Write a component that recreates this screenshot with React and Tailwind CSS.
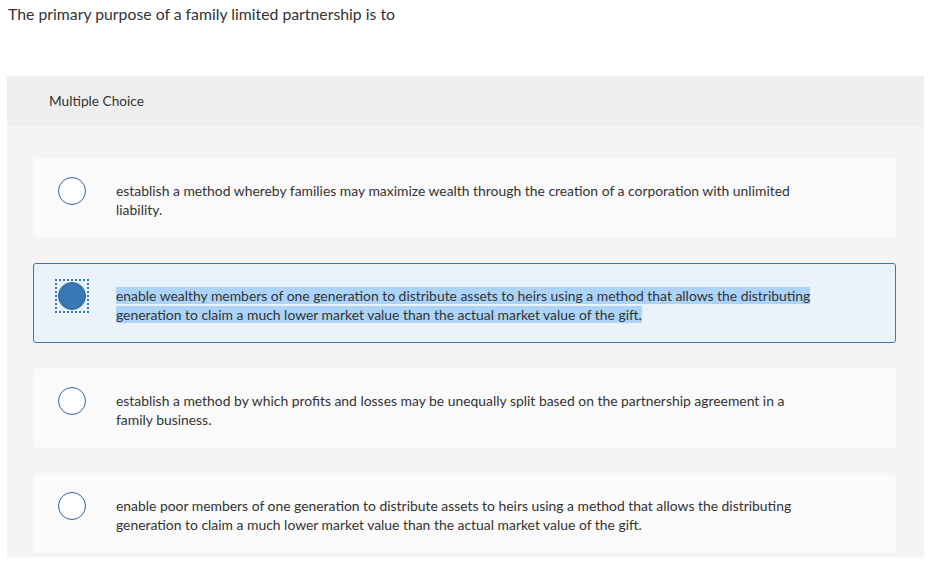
import React from "react";

const options = [
  {
    id: "a",
    lines: [
      "establish a method whereby families may maximize wealth through the creation of a corporation with unlimited",
      "liability.",
    ],
  },
  {
    id: "b",
    lines: [
      "enable wealthy members of one generation to distribute assets to heirs using a method that allows the distributing",
      "generation to claim a much lower market value than the actual market value of the gift.",
    ],
    selected: true,
  },
  {
    id: "c",
    lines: [
      "establish a method by which profits and losses may be unequally split based on the partnership agreement in a",
      "family business.",
    ],
  },
  {
    id: "d",
    lines: [
      "enable poor members of one generation to distribute assets to heirs using a method that allows the distributing",
      "generation to claim a much lower market value than the actual market value of the gift.",
    ],
  },
];

// Radio bouton simple, avec contour pointillé pour le focus
const Radio = ({ checked }) => (
  <div
    className={`w-[34px] h-[34px] flex items-center justify-center ${
      checked ? "outline-2 outline-dotted outline-[#3a78b5] -outline-offset-2" : ""
    }`}
  >
    <div
      className={`w-[28px] h-[28px] rounded-full border border-[#2f6596] ${
        checked ? "bg-[#3a78b5]" : "bg-white"
      }`}
    ></div>
  </div>
);

const App = () => {
  return (
    <div
      className="w-[933px] h-[572px] bg-white text-[#333]"
      style={{ fontFamily: "Lato, 'Open Sans', sans-serif" }}
    >
      <div className="pl-[8px] pt-[5px] text-[15.8px] leading-[18px]">
        The primary purpose of a family limited partnership is to
      </div>

      <div className="mt-[53px] ml-[7px] w-[917px] bg-[#f4f4f4]">
        <div className="h-[50px] bg-[#efefef] flex items-center pl-[42px] text-[13.7px]">
          Multiple Choice
        </div>

        <div className="pt-[32px] pb-[4px] pl-[26px] pr-[28px] flex flex-col gap-[25px]">
          {options.map((opt) => (
            <div
              key={opt.id}
              className={`h-[80px] flex items-start rounded-[3px] ${
                opt.selected
                  ? "bg-[#eaf2fa] border border-[#3a78b5]"
                  : "bg-[#fafafa] border border-transparent"
              }`}
            >
              <div className="w-[76px] mt-[15px] flex justify-center">
                <Radio checked={opt.selected} />
              </div>
              <div className="ml-[6px] mt-[22px] text-[13.9px] leading-[19px]">
                {opt.lines.map((line, i) => (
                  <div key={i}>
                    <span className={opt.selected ? "bg-[#acd4f8]" : ""}>
                      {line}
                    </span>
                  </div>
                ))}
              </div>
            </div>
          ))}
        </div>
      </div>
    </div>
  );
};

export default App;
